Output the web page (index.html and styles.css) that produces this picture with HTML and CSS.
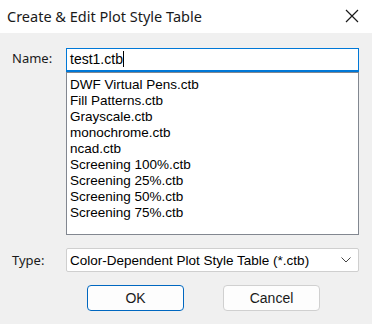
FILE: index.html
```html
<!DOCTYPE html>
<html lang="en">
<head>
    <meta charset="UTF-8">
    <title>Create &amp; Edit Plot Style Table</title>
    <link rel="stylesheet" href="styles.css">
</head>
<body>
    <div class="dialog">
        <div class="titlebar">
            <span class="title">Create &amp; Edit Plot Style Table</span>
            <svg class="close" width="14" height="14" viewBox="0 0 14 14">
                <path d="M1 1 L13 13 M13 1 L1 13" stroke="#1a1a1a" stroke-width="1.2" fill="none"/>
            </svg>
        </div>
        <div class="content">
            <div class="row">
                <label class="label name-label">Name:</label>
                <div class="field">
                    <div class="name-input">test1.ctb<span class="caret"></span></div>
                    <div class="list">
                        <div class="item">DWF Virtual Pens.ctb</div>
                        <div class="item">Fill Patterns.ctb</div>
                        <div class="item">Grayscale.ctb</div>
                        <div class="item">monochrome.ctb</div>
                        <div class="item">ncad.ctb</div>
                        <div class="item">Screening 100%.ctb</div>
                        <div class="item">Screening 25%.ctb</div>
                        <div class="item">Screening 50%.ctb</div>
                        <div class="item">Screening 75%.ctb</div>
                    </div>
                </div>
            </div>
            <div class="row type-row">
                <label class="label">Type:</label>
                <div class="select">
                    <span>Color-Dependent Plot Style Table (*.ctb)</span>
                    <svg width="10" height="6" viewBox="0 0 10 6">
                        <path d="M0.5 0.5 L5 5 L9.5 0.5" stroke="#444" stroke-width="1" fill="none"/>
                    </svg>
                </div>
            </div>
            <div class="buttons">
                <button class="btn btn-default">OK</button>
                <button class="btn">Cancel</button>
            </div>
        </div>
    </div>
</body>
</html>
```

FILE: styles.css
```css
html, body {
    margin: 0;
    padding: 0;
}
body {
    width: 372px;
    height: 324px;
    overflow: hidden;
    background: #f0f0f0;
}
.dialog {
    width: 372px;
    height: 324px;
    display: flex;
    flex-direction: column;
}
.titlebar {
    height: 33px;
    background: #ffffff;
    display: flex;
    align-items: center;
    justify-content: space-between;
    padding: 0 13px 0 7px;
}
.title {
    font-family: "Noto Sans", sans-serif;
    font-size: 14.5px;
    color: #1a1a1a;
    margin-top: -1px;
}
.close {
    margin-top: -1px;
}
.content {
    flex: 1;
    background: #f0f0f0;
    padding: 15px 0 0 12px;
}
.row {
    display: flex;
}
.label {
    width: 54px;
    font-family: "Noto Sans", sans-serif;
    font-size: 13px;
    color: #1a1a1a;
}
.name-label {
    padding-top: 1px;
}
.field {
    width: 293px;
}
.name-input {
    height: 21px;
    border: 1px solid #0078d7;
    border-bottom-width: 2px;
    background: #fff;
    font-family: "Liberation Sans", Arial, sans-serif;
    font-size: 14px;
    line-height: 21px;
    padding-left: 3px;
    color: #000;
}
.caret {
    display: inline-block;
    width: 1px;
    height: 16px;
    background: #000;
    vertical-align: -3px;
}
.list {
    height: 163px;
    box-sizing: border-box;
    border: 1px solid #828790;
    background: #fff;
    padding: 4px 0 0 3px;
}
.item {
    font-family: "Liberation Sans", Arial, sans-serif;
    font-size: 13.5px;
    line-height: 16px;
    color: #000;
}
.type-row {
    margin-top: 13px;
    align-items: center;
}
.select {
    width: 293px;
    height: 24px;
    box-sizing: border-box;
    border: 1px solid #cfcfcf;
    border-radius: 2px;
    background: #fff;
    display: flex;
    align-items: center;
    justify-content: space-between;
    padding: 0 7px 0 3px;
    font-family: "Liberation Sans", Arial, sans-serif;
    font-size: 13.5px;
    color: #000;
}
.buttons {
    display: flex;
    gap: 39px;
    margin: 13px 0 0 75px;
}
.btn {
    width: 97px;
    height: 26px;
    border: 1px solid #d0d0d0;
    border-radius: 4px;
    background: #fdfdfd;
    font-family: "Liberation Sans", Arial, sans-serif;
    font-size: 14px;
    color: #1a1a1a;
    padding: 0;
}
.btn-default {
    border-color: #0067c0;
}
```
